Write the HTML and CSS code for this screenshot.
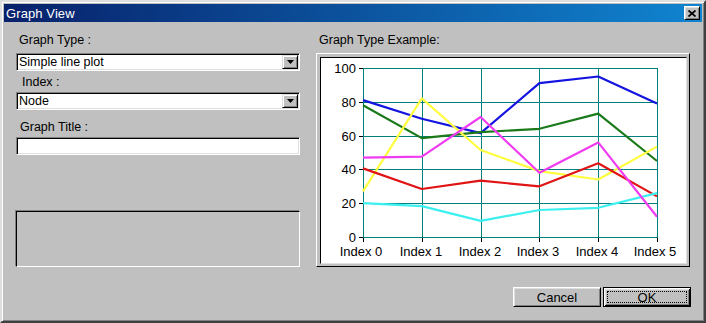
FILE: index.html
```html
<!DOCTYPE html>
<html>
<head>
<meta charset="utf-8">
<title>Graph View</title>
<link rel="stylesheet" href="styles.css">
</head>
<body>
<div class="window">
  <div class="titlebar">
    <span class="title">Graph View</span>
    <span class="close-btn">
      <svg width="8" height="7" viewBox="0 0 8 7"><path d="M0.5 0.5 L7.5 6.5 M7.5 0.5 L0.5 6.5" stroke="#000" stroke-width="1.7" fill="none"/></svg>
    </span>
  </div>
  <div class="client">
    <div class="main">
      <div class="left">
        <div class="label l1">Graph Type :</div>
        <div class="combo">
          <span class="combo-text">Simple line plot</span>
          <span class="drop"><svg width="7" height="4" viewBox="0 0 7 4"><polygon points="0,0 7,0 3.5,4" fill="#000"/></svg></span>
        </div>
        <div class="label l2">Index :</div>
        <div class="combo c2">
          <span class="combo-text">Node</span>
          <span class="drop"><svg width="7" height="4" viewBox="0 0 7 4"><polygon points="0,0 7,0 3.5,4" fill="#000"/></svg></span>
        </div>
        <div class="label l3">Graph Title :</div>
        <div class="edit"></div>
        <div class="static-frame"></div>
      </div>
      <div class="right">
        <div class="label lr">Graph Type Example:</div>
        <div class="chart-frame">
          <div class="chart-inner">
            <svg class="chart" width="365" height="206" viewBox="0 0 365 206">
              <g stroke="#007f7f" stroke-width="1" shape-rendering="crispEdges">
                <line x1="42" y1="10.5" x2="336" y2="10.5"/>
                <line x1="42" y1="44.5" x2="336" y2="44.5"/>
                <line x1="42" y1="78.5" x2="336" y2="78.5"/>
                <line x1="42" y1="111.5" x2="336" y2="111.5"/>
                <line x1="42" y1="145.5" x2="336" y2="145.5"/>
                <line x1="42" y1="179.5" x2="336" y2="179.5"/>
                <line x1="42.5" y1="10" x2="42.5" y2="180"/>
                <line x1="101.5" y1="10" x2="101.5" y2="180"/>
                <line x1="160.5" y1="10" x2="160.5" y2="180"/>
                <line x1="218.5" y1="10" x2="218.5" y2="180"/>
                <line x1="277.5" y1="10" x2="277.5" y2="180"/>
                <line x1="336.5" y1="10" x2="336.5" y2="180"/>
              </g>
              <g stroke="#000" stroke-width="1" shape-rendering="crispEdges">
                <line x1="38" y1="10.5" x2="42" y2="10.5"/>
                <line x1="38" y1="44.5" x2="42" y2="44.5"/>
                <line x1="38" y1="78.5" x2="42" y2="78.5"/>
                <line x1="38" y1="111.5" x2="42" y2="111.5"/>
                <line x1="38" y1="145.5" x2="42" y2="145.5"/>
                <line x1="38" y1="179.5" x2="42" y2="179.5"/>
                <line x1="42.5" y1="180" x2="42.5" y2="184"/>
                <line x1="101.5" y1="180" x2="101.5" y2="184"/>
                <line x1="160.5" y1="180" x2="160.5" y2="184"/>
                <line x1="218.5" y1="180" x2="218.5" y2="184"/>
                <line x1="277.5" y1="180" x2="277.5" y2="184"/>
                <line x1="336.5" y1="180" x2="336.5" y2="184"/>
              </g>
              <g class="ylab" text-anchor="end">
                <text x="35" y="15">100</text>
                <text x="35" y="49">80</text>
                <text x="35" y="83">60</text>
                <text x="35" y="116">40</text>
                <text x="35" y="150">20</text>
                <text x="35" y="184">0</text>
              </g>
              <g class="xlab" text-anchor="middle">
                <text x="40" y="198">Index 0</text>
                <text x="100" y="198">Index 1</text>
                <text x="159" y="198">Index 2</text>
                <text x="217" y="198">Index 3</text>
                <text x="276" y="198">Index 4</text>
                <text x="334" y="198">Index 5</text>
              </g>
              <g fill="none" stroke-width="2.2" stroke-linejoin="round">
                <polyline stroke="#1414e0" points="42,42.1 100.8,60.7 159.6,75.1 218.4,25.2 277.2,18.5 336,45.5"/>
                <polyline stroke="#1a7a1a" points="42,47.2 100.8,80.1 159.6,74.2 218.4,70.8 277.2,55.6 336,103"/>
                <polyline stroke="#ffff40" points="42,133.4 100.8,40.4 159.6,92 218.4,113.1 277.2,121.5 336,88.6"/>
                <polyline stroke="#e01414" points="42,110.4 100.8,131 159.6,122.7 218.4,128.3 277.2,105.3 336,138.4"/>
                <polyline stroke="#3cf0f0" points="42,145.2 100.8,148.1 159.6,162.9 218.4,152 277.2,149.8 336,135.1"/>
                <polyline stroke="#f03cf0" points="42,99.6 100.8,98.7 159.6,59 218.4,114.8 277.2,84.4 336,158.7"/>
              </g>
            </svg>
          </div>
        </div>
      </div>
    </div>
    <div class="buttons">
      <button class="btn">Cancel</button>
      <button class="btn default">OK</button>
    </div>
  </div>
</div>
</body>
</html>
```

FILE: styles.css
```css
html, body {
  margin: 0;
  padding: 0;
  background: #c0c0c0;
}

body {
  font-family: "Liberation Sans", Arial, sans-serif;
  font-size: 12.5px;
  color: #000;
}

.window {
  width: 706px;
  height: 323px;
  box-sizing: border-box;
  background: #c0c0c0;
  border: 2px solid;
  border-color: #dfdfdf #404040 #404040 #dfdfdf;
  box-shadow: inset 1px 1px #ffffff, inset -1px -1px #808080;
  padding: 2px;
  display: flex;
  flex-direction: column;
}

.titlebar {
  height: 18px;
  flex: 0 0 18px;
  background: linear-gradient(90deg, #08216b 0%, #1084d0 100%);
  display: flex;
  align-items: center;
  justify-content: space-between;
  padding: 0 2px 0 2px;
}

.title {
  color: #fff;
  font-size: 13px;
  letter-spacing: 0.1px;
}

.close-btn {
  width: 16px;
  height: 14px;
  box-sizing: border-box;
  background: #c0c0c0;
  border: 1px solid;
  border-color: #ffffff #000000 #000000 #ffffff;
  box-shadow: inset 1px 1px #dfdfdf, inset -1px -1px #808080;
  display: flex;
  align-items: center;
  justify-content: center;
}

.close-btn svg {
  display: block;
}

.client {
  flex: 1;
  display: flex;
  flex-direction: column;
}

.main {
  display: flex;
  padding-left: 12px;
  gap: 16px;
}

.left {
  width: 284px;
  display: flex;
  flex-direction: column;
}

.right {
  width: 374px;
  display: flex;
  flex-direction: column;
}

.label {
  line-height: 14px;
  height: 14px;
  white-space: nowrap;
}

.l1 { margin-top: 11px; padding-left: 3px; }
.l2 { margin-top: 4px; padding-left: 6px; }
.l3 { margin-top: 10px; padding-left: 4px; }
.lr { margin-top: 11px; padding-left: 3px; }

.combo, .edit {
  height: 18px;
  box-sizing: border-box;
  background: #fff;
  border: 1px solid;
  border-color: #808080 #ffffff #ffffff #808080;
  box-shadow: inset 1px 1px #000000, inset -1px -1px #dfdfdf;
  padding: 1px;
  display: flex;
  align-items: center;
}

.combo { margin-top: 6px; }
.combo.c2 { margin-top: 3px; }
.edit { margin-top: 3px; }

.combo-text {
  flex: 1;
  padding-left: 1px;
  line-height: 14px;
  white-space: nowrap;
}

.drop {
  width: 16px;
  height: 14px;
  box-sizing: border-box;
  background: #c0c0c0;
  border: 1px solid;
  border-color: #dfdfdf #000000 #000000 #dfdfdf;
  box-shadow: inset 1px 1px #ffffff, inset -1px -1px #808080;
  display: flex;
  align-items: center;
  justify-content: center;
}

.drop svg { display: block; }

.static-frame {
  margin-top: 56px;
  height: 56px;
  box-sizing: border-box;
  border: 1px solid;
  border-color: #000000 #ffffff #ffffff #000000;
  box-shadow: -1px -1px 0 #808080;
}

.chart-frame {
  margin-top: 6px;
  height: 214px;
  box-sizing: border-box;
  border: 1px solid;
  border-color: #ffffff #000000 #000000 #ffffff;
  padding: 3px 2px 2px 3px;
}

.chart-inner {
  height: 100%;
  box-sizing: border-box;
  border: 1px solid;
  border-color: #000000 #dfdfdf #dfdfdf #000000;
  background: #fff;
  overflow: hidden;
}

.chart {
  display: block;
}

.chart text {
  font-family: "Liberation Sans", Arial, sans-serif;
  font-size: 13px;
  fill: #000;
}

.buttons {
  display: flex;
  justify-content: flex-end;
  gap: 2px;
  margin-top: 20px;
  padding-right: 11px;
}

.btn {
  width: 88px;
  height: 20px;
  box-sizing: border-box;
  background: #c0c0c0;
  font-family: "Liberation Sans", Arial, sans-serif;
  font-size: 13px;
  color: #000;
  padding: 0;
  border: 1px solid;
  border-color: #ffffff #000000 #000000 #ffffff;
  box-shadow: inset 1px 1px #dfdfdf, inset -1px -1px #808080;
}

.btn.default {
  border-color: #000;
  box-shadow: inset 1px 1px #ffffff, inset -1px -1px #000000, inset 2px 2px #dfdfdf, inset -2px -2px #808080;
  outline: 1px dotted #000;
  outline-offset: -5px;
}
```
